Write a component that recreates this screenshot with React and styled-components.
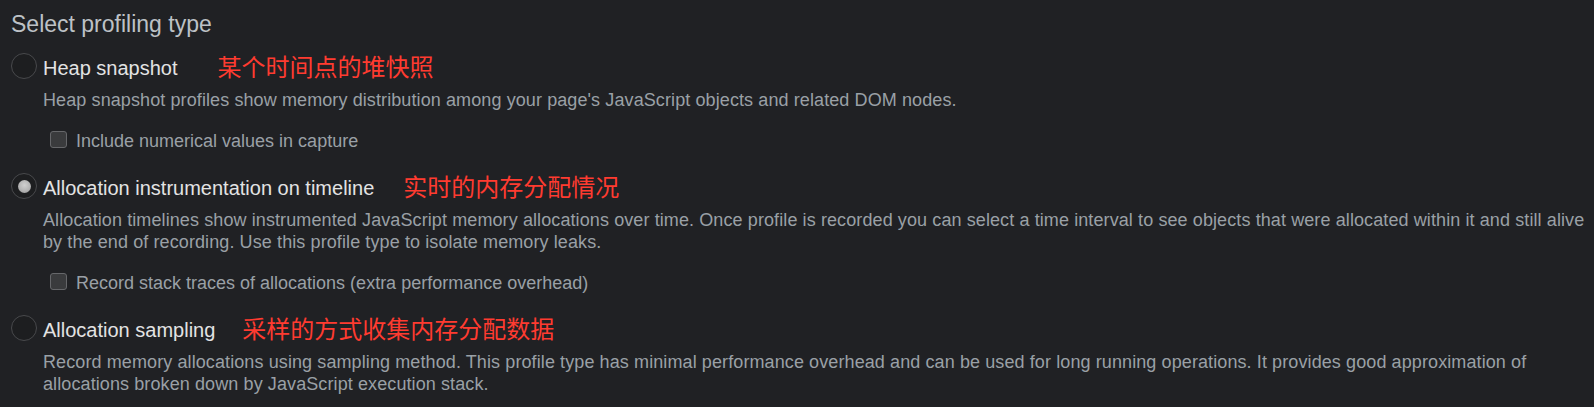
import React from "react";
import styled, { createGlobalStyle } from "styled-components";

const Global = createGlobalStyle`
  html, body { margin: 0; padding: 0; background: #202124; }
  body { font-family: "Liberation Sans", Arial, sans-serif; }
`;

const Page = styled.div`
  box-sizing: border-box;
  width: 1594px;
  height: 407px;
  padding: 11px 4px 0 11px;
  background: #202124;
  overflow: hidden;
`;

const Header = styled.div`
  font-size: 23px;
  line-height: 26px;
  color: #bdc1c6;
  margin-bottom: 16px;
`;

const Option = styled.div`
  display: grid;
  grid-template-columns: 32px 1fr;
  margin-bottom: ${(p) => p.$after}px;
`;

const Radio = styled.span`
  box-sizing: border-box;
  width: 26px;
  height: 26px;
  border-radius: 50%;
  border: 1px solid #48494c;
  background: #1d1e20;
  display: flex;
  align-items: center;
  justify-content: center;
  &::after {
    content: "";
    display: ${(p) => (p.$checked ? "block" : "none")};
    width: 13px;
    height: 13px;
    border-radius: 50%;
    background: radial-gradient(circle at 50% 40%, #d0d0d0 0%, #b4b4b4 55%, #8e8e8e 100%);
  }
`;

const TitleRow = styled.div`
  display: flex;
  align-items: center;
  height: 26px;
`;

const Title = styled.span`
  font-size: 20px;
  line-height: 26px;
  color: #e3e3e3;
  position: relative;
  top: 2px;
`;

const Note = styled.span`
  font-family: "Noto Sans CJK SC", sans-serif;
  font-size: 24px;
  line-height: 26px;
  color: #ff3b30;
  margin-left: ${(p) => p.$gap}px;
`;

const Body = styled.div`
  grid-column: 2;
`;

const Desc = styled.p`
  margin: 10px 0 0;
  font-size: 18px;
  line-height: 22px;
  letter-spacing: 0.1px;
  color: #9aa0a6;
`;

const CheckRow = styled.label`
  display: flex;
  align-items: flex-start;
  gap: 9px;
  margin: 19px 0 0 7px;
  font-size: 18px;
  line-height: 22px;
  color: #9aa0a6;
`;

const Box = styled.span`
  box-sizing: border-box;
  flex: none;
  width: 17px;
  height: 17px;
  margin-top: 1px;
  border-radius: 3px;
  border: 1px solid #66676a;
  background: #3a3b3d;
`;

const options = [
  {
    title: "Heap snapshot",
    note: "某个时间点的堆快照",
    gap: 40,
    checked: false,
    desc: "Heap snapshot profiles show memory distribution among your page's JavaScript objects and related DOM nodes.",
    check: "Include numerical values in capture",
    after: 21,
  },
  {
    title: "Allocation instrumentation on timeline",
    note: "实时的内存分配情况",
    gap: 29,
    checked: true,
    desc: "Allocation timelines show instrumented JavaScript memory allocations over time. Once profile is recorded you can select a time interval to see objects that were allocated within it and still alive by the end of recording. Use this profile type to isolate memory leaks.",
    check: "Record stack traces of allocations (extra performance overhead)",
    after: 21,
  },
  {
    title: "Allocation sampling",
    note: "采样的方式收集内存分配数据",
    gap: 27,
    checked: false,
    desc: "Record memory allocations using sampling method. This profile type has minimal performance overhead and can be used for long running operations. It provides good approximation of allocations broken down by JavaScript execution stack.",
    after: 0,
  },
];

export default function App() {
  return (
    <Page>
      <Global />
      <Header>Select profiling type</Header>
      {options.map((o) => (
        <Option key={o.title} $after={o.after}>
          <Radio $checked={o.checked} />
          <TitleRow>
            <Title>{o.title}</Title>
            <Note $gap={o.gap}>{o.note}</Note>
          </TitleRow>
          <Body>
            <Desc>{o.desc}</Desc>
            {o.check && (
              <CheckRow>
                <Box />
                {o.check}
              </CheckRow>
            )}
          </Body>
        </Option>
      ))}
    </Page>
  );
}
